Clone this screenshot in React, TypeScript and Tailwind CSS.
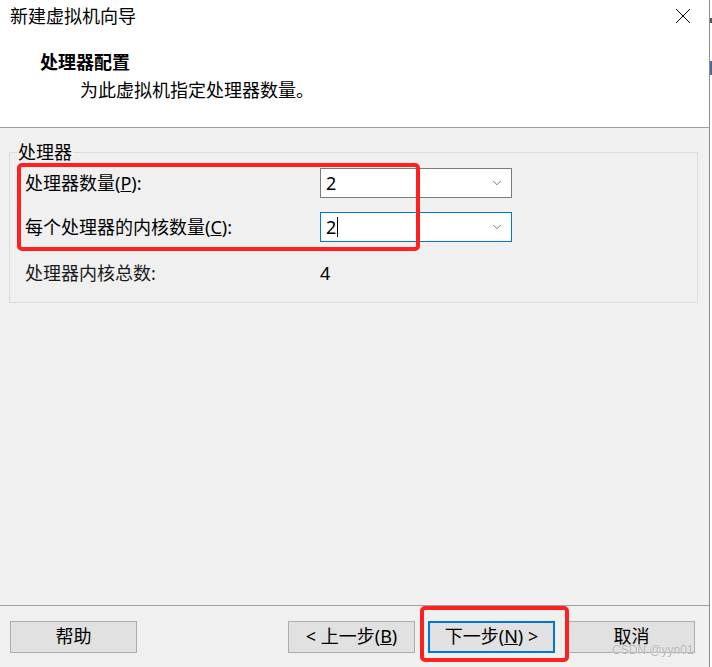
import { ChevronDown } from "lucide-react"

const font = { fontFamily: '"Noto Sans", "Noto Sans CJK SC", sans-serif' }

function Combo({ value, focused }: { value: string; focused?: boolean }) {
  return (
    <div
      className={`flex h-[30px] w-[192px] items-center justify-between bg-white pl-[5px] pr-[7px] ${
        focused ? "border border-[#0078d7]" : "border border-[#7a7a7a]"
      }`}
    >
      <span className="flex items-center text-[18px] leading-none text-black">
        {value}
        {focused && <span className="ml-[1px] inline-block h-[20px] w-[1px] bg-black" />}
      </span>
      <ChevronDown className="h-[14px] w-[14px] text-[#404040]" strokeWidth={1.2} />
    </div>
  )
}

function Btn({ children, primary }: { children: React.ReactNode; primary?: boolean }) {
  return (
    <button
      className={`flex h-[32px] w-[127px] items-center justify-center bg-[#e1e1e1] text-[18px] text-black ${
        primary ? "border-2 border-[#0078d7]" : "border border-[#adadad]"
      }`}
    >
      {children}
    </button>
  )
}

export default function App() {
  return (
    <div className="relative flex h-[667px] w-[712px] overflow-hidden bg-white" style={font}>
      <div className="flex h-full w-[709px] flex-col">
        {/* header */}
        <div className="h-[127px] bg-white">
          <div className="flex h-[32px] items-center justify-between pl-[10px] pr-[18px]">
            <span className="text-[18px] leading-none text-black">新建虚拟机向导</span>
            <svg width="16" height="16" viewBox="0 0 16 16" className="text-black">
              <path d="M1 1 L15 15 M15 1 L1 15" stroke="currentColor" strokeWidth="1" fill="none" />
            </svg>
          </div>
          <div className="mt-[17px] pl-[40px] text-[18px] font-bold leading-[26px] text-black">处理器配置</div>
          <div className="mt-[2px] pl-[80px] text-[18px] leading-[26px] text-black">为此虚拟机指定处理器数量。</div>
        </div>
        <div className="h-[1px] bg-[#a0a0a0]" />

        {/* body */}
        <div className="flex-1 bg-[#f0f0f0] pt-[12px]">
          <fieldset className="ml-[9px] h-[163px] w-[689px] border border-[#dcdcdc]">
            <legend className="ml-[7px] px-[1px] text-[18px] leading-[24px] text-black">处理器</legend>
            <div className="mt-[4px] grid grid-cols-[295px_1fr] items-center gap-y-[14px] pl-[15px]">
              <span className="text-[18px] text-black">
                处理器数量(<span className="underline">P</span>):
              </span>
              <Combo value="2" />
              <span className="text-[18px] text-black">
                每个处理器的内核数量(<span className="underline">C</span>):
              </span>
              <Combo value="2" focused />
              <span className="mt-[2px] flex h-[30px] items-center text-[18px] text-[#1a1a1a]">处理器内核总数:</span>
              <span className="mt-[2px] flex h-[30px] items-center text-[18px] text-black">4</span>
            </div>
          </fieldset>
        </div>
        <div className="h-[1px] bg-[#a0a0a0]" />

        {/* footer */}
        <div className="flex h-[61px] items-center justify-between bg-[#f0f0f0] pl-[10px] pr-[14px]">
          <Btn>帮助</Btn>
          <div className="flex gap-[13px]">
            <Btn>
              &lt; 上一步(<span className="underline">B</span>)
            </Btn>
            <Btn primary>
              下一步(<span className="underline">N</span>) &gt;
            </Btn>
            <Btn>取消</Btn>
          </div>
        </div>
      </div>
      <div className="h-full w-[1px] bg-[#8c8c8c]" />
      <div className="flex h-full w-[2px] flex-col bg-white">
        <div className="mt-[18px] h-[5px] bg-[#555]" />
        <div className="mt-[38px] h-[14px] bg-[#4a6a9a]" />
      </div>

      {/* annotations */}
      <div className="absolute left-[17px] top-[163px] h-[88px] w-[403px] rounded-[5px] border-[4px] border-[#ff2020]" />
      <div className="absolute left-[420px] top-[606px] h-[56px] w-[149px] rounded-[5px] border-[4px] border-[#ff2020]" />
      <div
        className="absolute left-[612px] top-[642px] text-[12px] leading-[16px] text-[#b4b4b4]"
        style={{ fontFamily: '"Liberation Sans", sans-serif', textShadow: "0 0 1px #fff" }}
      >
        CSDN @yyn01
      </div>
    </div>
  )
}
